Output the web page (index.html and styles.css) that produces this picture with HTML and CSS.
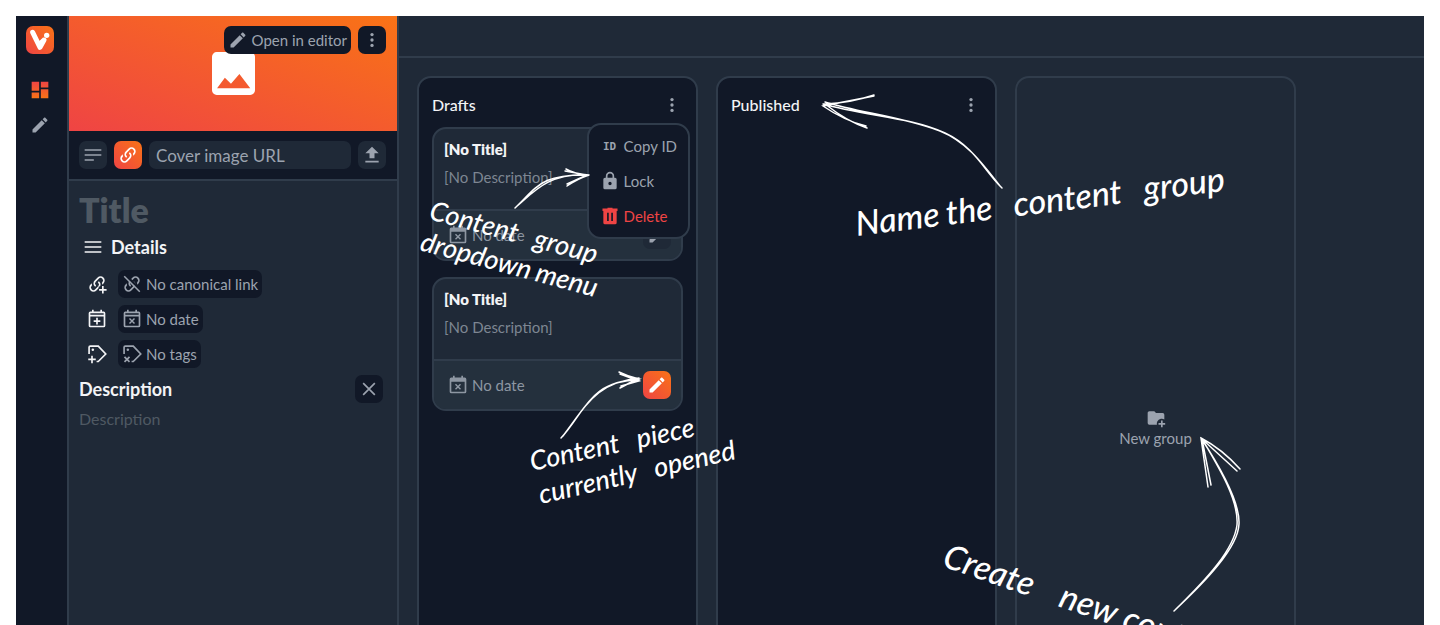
FILE: index.html
```html
<!DOCTYPE html>
<html lang="en">
<head>
  <meta charset="UTF-8">
  <meta name="viewport" content="width=device-width, initial-scale=1.0">
  <title>Dashboard</title>
  <link rel="stylesheet" href="styles.css">
</head>
<body>
  <!-- icon set -->
  <svg class="sprite" aria-hidden="true">
    <defs>
      <linearGradient id="brand" x1="0" y1="0" x2="0" y2="1">
        <stop offset="0" stop-color="#ef4444"/>
        <stop offset="1" stop-color="#f97316"/>
      </linearGradient>
    </defs>
    <symbol id="i-pencil" viewBox="0 0 24 24"><path d="M20.71 7.04c.39-.39.39-1.04 0-1.41l-2.34-2.34c-.37-.39-1.02-.39-1.41 0l-1.84 1.83 3.75 3.75M3 17.25V21h3.75L17.81 9.93l-3.75-3.75L3 17.25Z"/></symbol>
    <symbol id="i-dots" viewBox="0 0 24 24"><circle cx="12" cy="5.500" r="2"/><circle cx="12" cy="12" r="2"/><circle cx="12" cy="18.500" r="2"/></symbol>
    <symbol id="i-link" viewBox="0 0 24 24"><path d="M10.59 13.41c.41.39.41 1.03 0 1.42-.39.39-1.03.39-1.42 0a5.003 5.003 0 0 1 0-7.07l3.54-3.54a5.003 5.003 0 0 1 7.07 0 5.003 5.003 0 0 1 0 7.07l-1.49 1.49c.01-.82-.12-1.64-.4-2.42l.47-.48a2.982 2.982 0 0 0 0-4.24 2.982 2.982 0 0 0-4.24 0l-3.53 3.53a2.982 2.982 0 0 0 0 4.24m2.82-4.24c.39-.39 1.03-.39 1.42 0a5.003 5.003 0 0 1 0 7.07l-3.54 3.54a5.003 5.003 0 0 1-7.07 0 5.003 5.003 0 0 1 0-7.07l1.49-1.49c-.01.82.12 1.64.4 2.43l-.47.47a2.982 2.982 0 0 0 0 4.24 2.982 2.982 0 0 0 4.24 0l3.53-3.53a2.982 2.982 0 0 0 0-4.24.973.973 0 0 1 0-1.42Z"/></symbol>
    <symbol id="i-link-plus" viewBox="0 0 24 24">
      <mask id="m-plus"><path fill="#fff" d="M0 0h24v24H0z"/><path fill="#000" d="M14 15h10v9H14z"/></mask>
      <g mask="url(#m-plus)"><use href="#i-link" width="24" height="24"/></g>
      <path d="M18 14.500h2V18h3.500v2H20v3.500h-2V20h-3.500v-2H18z"/>
    </symbol>
    <symbol id="i-link-off" viewBox="0 0 24 24">
      <mask id="m-off"><path fill="#fff" d="M0 0h24v24H0z"/><path stroke="#000" stroke-width="3" d="M4 1l20 20"/></mask>
      <g mask="url(#m-off)"><use href="#i-link" width="24" height="24"/></g>
      <path d="M2 3.300L3.300 2 22 20.700 20.700 22z"/>
    </symbol>
    <symbol id="i-cal-plus" viewBox="0 0 24 24"><path fill-rule="evenodd" d="M6 1h2v2h8V1h2v2h2a2 2 0 0 1 2 2v15a2 2 0 0 1-2 2H4a2 2 0 0 1-2-2V5a2 2 0 0 1 2-2h2zM4 9v11h16V9zM4 5v2h16V5z"/><path d="M11 10.500h2v3h3v2h-3v3h-2v-3H8v-2h3z"/></symbol>
    <symbol id="i-cal-x" viewBox="0 0 24 24"><path fill-rule="evenodd" d="M6 1h2v2h8V1h2v2h2a2 2 0 0 1 2 2v15a2 2 0 0 1-2 2H4a2 2 0 0 1-2-2V5a2 2 0 0 1 2-2h2zM4 9v11h16V9zM4 5v2h16V5z"/><path fill="none" stroke="currentColor" stroke-width="1.700" d="M9 11.500l6 6m0-6l-6 6"/></symbol>
    <symbol id="i-cal-x-solid" viewBox="0 0 24 24"><path fill-rule="evenodd" d="M6 1h2v2h8V1h2v2h2a2 2 0 0 1 2 2v15a2 2 0 0 1-2 2H4a2 2 0 0 1-2-2V5a2 2 0 0 1 2-2h2zM4 8v12h16V8z"/><path fill="none" stroke="currentColor" stroke-width="1.700" d="M9 11l6 6m0-6l-6 6"/></symbol>
    <symbol id="i-tag-plus" viewBox="0 0 24 24"><g fill="none" stroke="currentColor" stroke-width="2"><path d="M2.500 12V4a1.500 1.500 0 0 1 1.500-1.500H13.500L22.500 12l-9 9h-2"/><path d="M6 14v9M1.500 18.500h9"/></g><circle cx="7" cy="7" r="1.500"/></symbol>
    <symbol id="i-tag-x" viewBox="0 0 24 24"><g fill="none" stroke="currentColor" stroke-width="2"><path d="M2.500 12V4a1.500 1.500 0 0 1 1.500-1.500H13.500L22.500 12l-9 9h-2"/><path d="M3 15.500l6 6m0-6l-6 6"/></g><circle cx="7" cy="7" r="1.500"/></symbol>
    <symbol id="i-lock" viewBox="0 0 24 24"><path d="M12 17a2 2 0 0 0 2-2 2 2 0 0 0-2-2 2 2 0 0 0-2 2 2 2 0 0 0 2 2m6-9a2 2 0 0 1 2 2v10a2 2 0 0 1-2 2H6a2 2 0 0 1-2-2V10a2 2 0 0 1 2-2h1V6a5 5 0 0 1 10 0v2h1m-6-5a3 3 0 0 0-3 3v2h6V6a3 3 0 0 0-3-3Z"/></symbol>
    <symbol id="i-trash" viewBox="0 0 24 24"><path fill-rule="evenodd" d="M9 2h6v1h6v3h-1v14a2 2 0 0 1-2 2H6a2 2 0 0 1-2-2V6H3V3h6zM8.500 8v10h2V8zM13.500 8v10h2V8z"/></symbol>
    <symbol id="i-text" viewBox="0 0 24 24"><path d="M2 5h20v2H2zM2 11h20v2H2zM2 17h11v2H2z"/></symbol>
    <symbol id="i-menu" viewBox="0 0 24 24"><path d="M2 5h20v2H2zM2 11h20v2H2zM2 17h20v2H2z"/></symbol>
    <symbol id="i-upload" viewBox="0 0 24 24"><path d="M9 16v-6H4l8-8 8 8h-5v6zM4 19h16v2H4z"/></symbol>
    <symbol id="i-close" viewBox="0 0 24 24"><path fill="none" stroke="currentColor" stroke-width="2" d="M5 5l14 14M19 5L5 19"/></symbol>
    <symbol id="i-board" viewBox="0 0 24 24"><path fill="url(#brand)" d="M13 2v7h9V2m-9 20h9V11h-9M2 22h9v-7H2m0-2h9V2H2v11Z"/></symbol>
    <symbol id="i-folder-plus" viewBox="0 0 24 24"><path d="M13 19c0 .34.04.67.09 1H4a2 2 0 0 1-2-2V6c0-1.110.89-2 2-2h6l2 2h8a2 2 0 0 1 2 2v5.810c-.88-.51-1.900-.81-3-.81-3.310 0-6 2.690-6 6m7-1v-3h-2v3h-3v2h3v3h2v-3h3v-2h-3Z"/></symbol>
  </svg>

  <div class="app">
    <nav class="sidebar">
      <a class="logo" href="#" aria-label="Home">
        <svg viewBox="0 0 84 84"><path fill="none" stroke="#fff" stroke-width="15" stroke-linecap="round" stroke-linejoin="round" d="M20 19L42 64L54 42"/><path fill="#fff" d="M36 48l12-10 8 8-12 20z"/><circle cx="62" cy="28" r="8" fill="#fff"/></svg>
      </a>
      <a class="nav-link" href="#" aria-label="Dashboard"><svg class="icon"><use href="#i-board"/></svg></a>
      <a class="nav-link" href="#" aria-label="Editor"><svg class="icon"><use href="#i-pencil"/></svg></a>
    </nav>

    <aside class="panel">
      <div class="cover">
        <svg class="cover-image" viewBox="0 0 127 127"><path fill="#fff" fill-rule="evenodd" d="M14 0h99a14 14 0 0 1 14 14v99a14 14 0 0 1-14 14H14a14 14 0 0 1-14-14V14A14 14 0 0 1 14 0zM15 107h98L81 65 56 94 38 76z"/></svg>
        <div class="cover-actions">
          <button class="btn"><svg class="icon"><use href="#i-pencil"/></svg>Open in editor</button>
          <button class="btn square" aria-label="More"><svg class="icon"><use href="#i-dots"/></svg></button>
        </div>
      </div>
      <div class="cover-bar">
        <button class="btn square soft" aria-label="Alt text"><svg class="icon"><use href="#i-text"/></svg></button>
        <button class="btn square primary" aria-label="Link"><svg class="icon"><use href="#i-link"/></svg></button>
        <input class="url-input" type="text" placeholder="Cover image URL" aria-label="Cover image URL">
        <button class="btn square soft" aria-label="Upload"><svg class="icon"><use href="#i-upload"/></svg></button>
      </div>
      <div class="panel-body">
        <input class="title-input" type="text" placeholder="Title" aria-label="Title">
        <h2 class="section-title details"><svg class="icon"><use href="#i-menu"/></svg>Details</h2>
        <div class="meta">
          <div class="meta-row"><svg class="icon"><use href="#i-link-plus"/></svg><button class="btn"><svg class="icon"><use href="#i-link-off"/></svg>No canonical link</button></div>
          <div class="meta-row"><svg class="icon"><use href="#i-cal-plus"/></svg><button class="btn"><svg class="icon"><use href="#i-cal-x"/></svg>No date</button></div>
          <div class="meta-row"><svg class="icon"><use href="#i-tag-plus"/></svg><button class="btn"><svg class="icon"><use href="#i-tag-x"/></svg>No tags</button></div>
        </div>
        <div class="section-head">
          <h2 class="section-title">Description</h2>
          <button class="btn square" aria-label="Close"><svg class="icon"><use href="#i-close"/></svg></button>
        </div>
        <textarea class="description-input" rows="1" placeholder="Description" aria-label="Description"></textarea>
      </div>
    </aside>

    <main class="main">
      <header class="topbar"></header>
      <div class="board">
        <section class="column">
          <div class="column-head">
            <h3 class="column-title">Drafts</h3>
            <button class="more" aria-label="Group menu"><svg class="icon"><use href="#i-dots"/></svg></button>
            <div class="menu">
              <button class="menu-item"><span class="id-icon">ID</span>Copy ID</button>
              <button class="menu-item"><svg class="icon"><use href="#i-lock"/></svg>Lock</button>
              <button class="menu-item danger"><svg class="icon"><use href="#i-trash"/></svg>Delete</button>
            </div>
          </div>
          <div class="cards">
            <article class="card">
              <div class="card-body">
                <h4 class="card-title">[No Title]</h4>
                <p class="card-text">[No Description]</p>
              </div>
              <div class="card-foot">
                <span class="date"><svg class="icon"><use href="#i-cal-x-solid"/></svg>No date</span>
                <button class="btn square soft" aria-label="Edit"><svg class="icon"><use href="#i-pencil"/></svg></button>
              </div>
            </article>
            <article class="card">
              <div class="card-body">
                <h4 class="card-title">[No Title]</h4>
                <p class="card-text">[No Description]</p>
              </div>
              <div class="card-foot">
                <span class="date"><svg class="icon"><use href="#i-cal-x-solid"/></svg>No date</span>
                <button class="btn square primary" aria-label="Edit"><svg class="icon"><use href="#i-pencil"/></svg></button>
              </div>
            </article>
          </div>
        </section>

        <section class="column">
          <div class="column-head">
            <h3 class="column-title">Published</h3>
            <button class="more" aria-label="Group menu"><svg class="icon"><use href="#i-dots"/></svg></button>
          </div>
        </section>

        <button class="column new-group">
          <svg class="icon"><use href="#i-folder-plus"/></svg>
          New group
        </button>
      </div>
    </main>
  </div>

  <!-- hand drawn notes -->
  <svg class="notes" width="1440" height="800" viewBox="0 0 1440 800">
    <g class="arrows">
      <path d="M515 208C538 186 541 174 589 175M516 207C532 194 548 172 589 175M566 169Q574 174 589 175Q577 179 567 186M565 171L587 175L567 184"/>
      <path d="M561 438C585 412 590 380 639 380M563 436C588 403 596 383 639 378M619 372Q629 377 639 379Q630 382 620 388M620 374L639 381L621 386"/>
      <path d="M1002 188C985 172 975 147 945 133C910 117 865 116 823 104M1000 186C980 160 965 141 940 131C900 116 860 113 825 102M874 95Q850 103 825 104Q848 122 867 128M874 96L823 106Q845 121 866 126"/>
      <path d="M1174 611C1205 582 1238 548 1239 524C1240 504 1222 470 1201 438M1175 610C1208 578 1234 549 1237 525C1239 500 1218 466 1202 439M1208 487L1201 438Q1222 449 1240 469M1211 485L1202 439L1237 471"/>
    </g>
    <g class="note small" transform="translate(428 219) rotate(15)">
      <text>Content<tspan x="108">group</tspan></text>
    </g>
    <g class="note small" transform="translate(419 250) rotate(15)">
      <text>dropdown<tspan x="119">menu</tspan></text>
    </g>
    <g class="note small" transform="translate(532 471) rotate(-12)">
      <text>Content<tspan x="109">piece</tspan></text>
    </g>
    <g class="note small" transform="translate(541 504) rotate(-13)">
      <text>currently<tspan x="118">opened</tspan></text>
    </g>
    <g class="note" transform="translate(857 236) rotate(-7)">
      <text>Name<tspan x="91">the</tspan><tspan x="159">content</tspan><tspan x="290">group</tspan></text>
    </g>
    <g class="note" transform="translate(941 566) rotate(19)">
      <text>Create<tspan x="123">new</tspan><tspan x="190">content</tspan></text>
    </g>
  </svg>
</body>
</html>
```
FILE: styles.css
```css
* {
  box-sizing: border-box;
}
body {
  margin: 0;
  padding: 16px 16px 0;
  height: 100vh;
  overflow: hidden;
  background: #fff;
  color: #f3f4f6;
  font-family: "Lato", "Open Sans", sans-serif;
  font-size: 15px;
  line-height: 20px;
}
h2, h3, h4, p {
  margin: 0;
}
button, input, textarea {
  margin: 0;
  padding: 0;
  border: none;
  background: none;
  color: inherit;
  font: inherit;
}
.sprite {
  position: absolute;
  width: 0;
  height: 0;
}
.icon {
  width: 20px;
  height: 20px;
  flex: none;
  fill: currentColor;
}
.app {
  display: flex;
  min-height: 782px;
  background: #1f2937;
}

/* sidebar */
.sidebar {
  display: flex;
  flex-direction: column;
  width: 53px;
  flex: none;
  padding: 10px;
  background: #111827;
  border-right: 2px solid #303c4b;
}
.logo {
  width: 28px;
  height: 28px;
  margin-bottom: 22px;
  border-radius: 7px;
  background: linear-gradient(45deg, #ef4444, #f97316);
}
.logo svg {
  display: block;
}
.nav-link {
  display: flex;
  align-items: center;
  justify-content: center;
  width: 28px;
  height: 28px;
  margin-bottom: 7px;
  color: #9ca3af;
}

/* left panel */
.panel {
  width: 330px;
  flex: none;
  border-right: 2px solid #303c4b;
}
.cover {
  position: relative;
  display: flex;
  align-items: center;
  justify-content: center;
  height: 115px;
  background: linear-gradient(to top right, #ef4444, #f97316);
}
.cover-image {
  width: 43px;
  height: 43px;
}
.cover-actions {
  position: absolute;
  top: 10px;
  right: 11px;
  display: flex;
  gap: 7px;
}
.btn {
  display: flex;
  align-items: center;
  gap: 4px;
  height: 28px;
  padding: 0 4px;
  border-radius: 7px;
  background: #111827;
  color: #9ca3af;
}
.square {
  justify-content: center;
  width: 28px;
  flex: none;
}
.soft {
  background: #1f2937;
}
.primary {
  background: linear-gradient(45deg, #ef4444, #f97316);
  color: #fff;
}
.cover-bar {
  display: flex;
  gap: 7px;
  padding: 10px 11px 10px 10px;
  background: #111827;
  border-bottom: 2px solid #303c4b;
}
.url-input {
  flex: 1;
  min-width: 0;
  height: 28px;
  padding: 0 7px;
  border-radius: 7px;
  background: #1f2937;
  font-size: 17px;
}
.url-input::placeholder {
  color: #9ca3af;
  opacity: 1;
}
.panel-body {
  padding: 7px 14px 14px 10px;
}
.title-input {
  display: block;
  width: 100%;
  height: 42px;
  font-size: 34px;
  font-weight: 800;
}
.title-input::placeholder, .description-input::placeholder {
  color: #4f5963;
  opacity: 1;
}
.section-title {
  font-size: 18px;
  font-weight: 700;
  line-height: 28px;
}
.details {
  display: flex;
  align-items: center;
  gap: 8px;
  padding: 3px 0 0 4px;
}
.meta {
  display: flex;
  flex-direction: column;
  gap: 7px;
  padding: 9px 0 7px 8px;
}
.meta-row {
  display: flex;
  align-items: center;
  gap: 11px;
}
.section-head {
  display: flex;
  align-items: center;
  justify-content: space-between;
}
.description-input {
  display: block;
  width: 100%;
  margin-top: 6px;
  resize: none;
  font-size: 16px;
}

/* board */
.main {
  display: flex;
  flex-direction: column;
  flex: 1;
  min-width: 0;
}
.topbar {
  height: 42px;
  border-bottom: 2px solid #303c4b;
}
.board {
  display: flex;
  flex: 1;
  gap: 18px;
  padding: 18px;
}
.column {
  width: 281px;
  flex: none;
  padding: 13px;
  border: 2px solid #303c4b;
  border-radius: 14px;
  background: #111827;
}
.column-head {
  position: relative;
  display: flex;
  align-items: center;
  justify-content: space-between;
  height: 28px;
  margin-bottom: 8px;
}
.column-title {
  font-size: 16px;
  font-weight: 500;
}
.more {
  display: flex;
  align-items: center;
  justify-content: center;
  width: 22px;
  height: 28px;
  color: #9ca3af;
}
.menu {
  position: absolute;
  z-index: 1;
  top: 32px;
  right: -7px;
  display: flex;
  flex-direction: column;
  gap: 7px;
  padding: 7px;
  border: 2px solid #303c4b;
  border-radius: 14px;
  background: #111827;
}
.menu-item {
  display: flex;
  align-items: center;
  gap: 4px;
  height: 28px;
  padding: 0 4px;
  color: #9ca3af;
  white-space: nowrap;
}
.danger {
  color: #ef4444;
}
.id-icon {
  width: 20px;
  font: bold 11px "DejaVu Sans Mono", monospace;
  text-align: center;
}
.cards {
  display: flex;
  flex-direction: column;
  gap: 16px;
}
.card {
  border: 2px solid #303c4b;
  border-radius: 14px;
  background: #1f2937;
  overflow: hidden;
}
.card-body {
  display: flex;
  flex-direction: column;
  gap: 8px;
  min-height: 82px;
  padding: 10px;
  border-bottom: 2px solid #303c4b;
}
.card-title {
  font-size: 15px;
  font-weight: 800;
}
.card-text {
  color: #7d8692;
}
.card-foot {
  display: flex;
  align-items: center;
  justify-content: space-between;
  padding: 10px 10px 10px 14px;
  background: #24303d;
}
.date {
  display: flex;
  align-items: center;
  gap: 4px;
  color: #8d96a2;
}
.new-group {
  display: flex;
  flex-direction: column;
  align-items: center;
  justify-content: center;
  background: none;
  color: #9ca3af;
}

/* notes over the app */
.notes {
  position: absolute;
  top: 0;
  left: 0;
  z-index: 2;
  pointer-events: none;
}
.arrows {
  fill: none;
  stroke: #fff;
  stroke-width: 1.5;
  stroke-linecap: round;
}
.note {
  fill: #fff;
  font-family: "Lato", sans-serif;
  font-size: 34px;
  font-style: italic;
  font-weight: 500;
}
.small {
  font-size: 27px;
}
```
